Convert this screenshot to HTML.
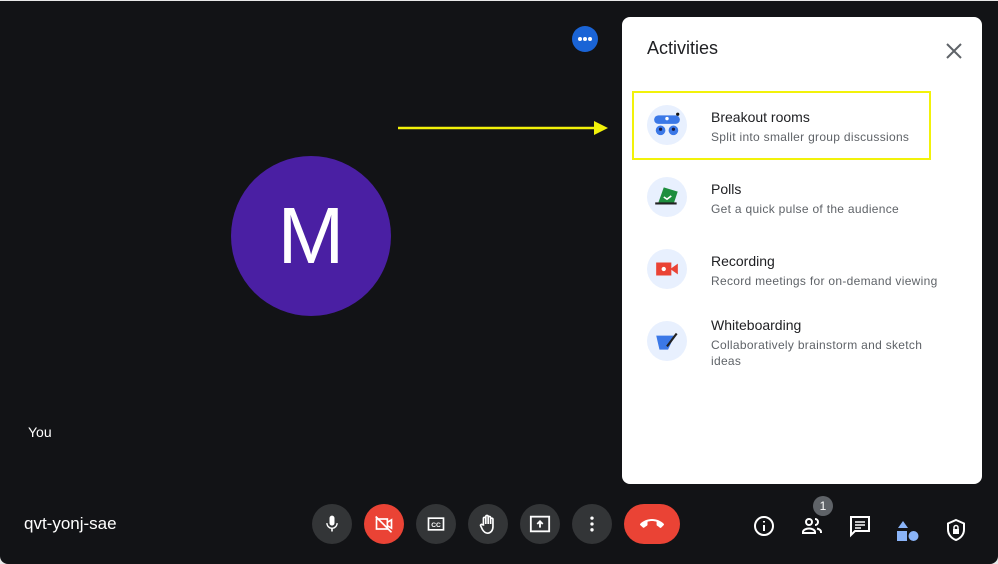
<!DOCTYPE html>
<html><head><style>
*{margin:0;padding:0;box-sizing:border-box}
body{width:998px;height:564px;background:#e8e8e8;font-family:"Liberation Sans",Arial,sans-serif;overflow:hidden;position:relative}
.main{position:absolute;left:0;top:1px;width:998px;height:563px;background:#121316;border-radius:0 0 8px 8px}
.abs{position:absolute}
.btn{position:absolute;top:503px;width:40px;height:40px;border-radius:20px;background:#333537;display:flex;align-items:center;justify-content:center}
.panel{position:absolute;left:622px;top:17px;width:360px;height:467px;background:#fff;border-radius:8px}
.item{position:absolute;left:89px;font-size:14px;color:#202124}
.item small{display:block;font-size:12px;color:#5f6368;margin-top:4px;letter-spacing:.3px;line-height:16px}
.ic{position:absolute;left:25px;width:40px;height:40px;border-radius:20px;background:#e8f0fe;display:flex;align-items:center;justify-content:center}
</style></head><body>
<div class="main">
<div class="abs" style="left:231px;top:155px;width:160px;height:160px;border-radius:80px;background:#4a1fa3;color:#fff;font-size:80px;text-align:center;line-height:160px">M</div>
<div class="abs" style="left:28px;top:423px;color:#fff;font-size:14px">You</div>
<div class="abs" style="left:24px;top:513px;color:#fff;font-size:17px">qvt-yonj-sae</div>
<svg class="abs" style="left:572px;top:25px" width="26" height="26"><circle cx="13" cy="13" r="13" fill="#1a64d6"/><circle cx="8" cy="13" r="2" fill="#fff"/><circle cx="13" cy="13" r="2" fill="#fff"/><circle cx="18" cy="13" r="2" fill="#fff"/></svg>
<svg class="abs" style="left:398px;top:117px" width="212" height="20"><line x1="0" y1="10" x2="198" y2="10" stroke="#f2f20a" stroke-width="2.5"/><polygon points="196,3 210,10 196,17" fill="#f2f20a"/></svg>

<div class="btn" style="left:312px"><svg width="20" height="20" viewBox="0 0 24 24" fill="#fff"><path d="M12 14a3 3 0 003-3V5a3 3 0 00-6 0v6a3 3 0 003 3zm5.3-3a5.3 5.3 0 01-10.6 0H5a7 7 0 006 6.9V21h2v-3.1A7 7 0 0019 11z"/></svg></div>
<div class="btn" style="left:364px;background:#ea4335"><svg width="20" height="20" viewBox="0 0 24 24" fill="none" stroke="#fff" stroke-width="2"><rect x="3" y="6" width="13" height="12"/><path d="M16 10l5-3v10l-5-3M2 3l19 19"/></svg></div>
<div class="btn" style="left:416px"><svg width="20" height="20" viewBox="0 0 24 24"><rect x="3" y="5" width="18" height="14" fill="none" stroke="#fff" stroke-width="2"/><text x="12" y="15.5" font-size="8" fill="#fff" text-anchor="middle" font-family="Liberation Sans" font-weight="bold">CC</text></svg></div>
<div class="btn" style="left:468px"><svg width="22" height="22" viewBox="0 0 24 24" fill="none" stroke="#fff" stroke-width="1.8"><path d="M7 13V6a1.3 1.3 0 012.6 0v6V4a1.3 1.3 0 012.6 0v8V5a1.3 1.3 0 012.6 0v7V7a1.3 1.3 0 012.6 0v8c0 4-2.5 7-6 7-2.5 0-4-1.5-5.5-4L4 14c-.6-1 .8-2 1.6-1.3z"/></svg></div>
<div class="btn" style="left:520px"><svg width="22" height="22" viewBox="0 0 24 24" fill="none" stroke="#fff" stroke-width="2"><rect x="2" y="4" width="20" height="16"/><path d="M12 16v-7M9 12l3-3 3 3" /></svg></div>
<div class="btn" style="left:572px"><svg width="20" height="20" viewBox="0 0 24 24" fill="#fff"><circle cx="12" cy="5" r="2"/><circle cx="12" cy="12" r="2"/><circle cx="12" cy="19" r="2"/></svg></div>
<div class="btn" style="left:624px;width:56px;background:#ea4335"><svg width="24" height="24" viewBox="0 0 24 24" fill="#fff"><path d="M12 9c-1.6 0-3.1.3-4.5.7v3.1c0 .4-.2.7-.6.9-1 .5-1.9 1.1-2.6 1.8-.2.2-.4.3-.7.3s-.5-.1-.7-.3L.3 13.1A1 1 0 010 12.4c0-.3.1-.5.3-.7C3.3 8.8 7.4 7 12 7s8.7 1.8 11.7 4.7c.2.2.3.4.3.7s-.1.5-.3.7l-2.5 2.5c-.2.2-.4.3-.7.3s-.5-.1-.7-.3c-.8-.7-1.6-1.3-2.6-1.8-.3-.2-.6-.5-.6-.9V9.7C15.1 9.3 13.6 9 12 9z"/></svg></div>

<svg class="abs" style="left:752px;top:513px" width="24" height="24" viewBox="0 0 24 24" fill="none" stroke="#fff" stroke-width="2"><circle cx="12" cy="12" r="9"/><path d="M12 11v6M12 7v1.5"/></svg>
<div class="abs" style="left:813px;top:495px;width:20px;height:20px;border-radius:10px;background:#5f6368;color:#fff;font-size:12px;text-align:center;line-height:20px">1</div>
<svg class="abs" style="left:800px;top:513px" width="24" height="24" viewBox="0 0 24 24" fill="none" stroke="#fff" stroke-width="2"><circle cx="9" cy="8" r="3"/><path d="M3 19v-1c0-2 3-3.5 6-3.5s6 1.5 6 3.5v1zM15 5a3 3 0 010 6M17 14.5c2 .5 4 1.5 4 3.5v1"/></svg>
<svg class="abs" style="left:848px;top:513px" width="24" height="24" viewBox="0 0 24 24" fill="none" stroke="#fff" stroke-width="2"><path d="M3 3h18v14H7l-4 4z"/><path d="M7 8h10M7 11h10M7 14h6" stroke-width="1.6"/></svg>
<svg class="abs" style="left:896px;top:519px" width="24" height="24" viewBox="0 0 24 24" fill="#8ab4f8"><polygon points="7,1 12,8 2,8"/><rect x="1" y="11" width="10" height="10"/><circle cx="17.5" cy="16" r="5"/></svg>
<svg class="abs" style="left:944px;top:517px" width="24" height="24" viewBox="0 0 24 24" fill="none" stroke="#fff" stroke-width="2"><path d="M12 2l8 3.5v6c0 5-3.5 9-8 10.5C7.5 20.5 4 16.5 4 11.5v-6z"/><rect x="9" y="11" width="6" height="5" fill="#fff" stroke="none"/><path d="M10 11V9.5a2 2 0 014 0V11" stroke-width="1.5"/></svg>
</div>

<div class="panel">
<div class="abs" style="left:25px;top:21px;font-size:18px;color:#202124">Activities</div>
<svg class="abs" style="left:322px;top:24px" width="20" height="20" viewBox="0 0 20 20" stroke="#5f6368" stroke-width="2"><path d="M3 3l14 14M17 3L3 17"/></svg>
<div class="abs" style="left:10px;top:74px;width:299px;height:69px;border:2px solid #f2f20a"></div>
<div class="ic" style="top:88px"><svg width="30" height="26" viewBox="0 0 28 24"><rect x="2" y="3" width="24" height="8" rx="4" fill="#3b78e7"/><circle cx="14" cy="6" r="1.6" fill="#fff"/><circle cx="8" cy="17" r="4.5" fill="#3b78e7"/><circle cx="20" cy="17" r="4.5" fill="#3b78e7"/><circle cx="8" cy="16" r="1.5" fill="#1a1a40"/><circle cx="20" cy="16" r="1.5" fill="#1a1a40"/><circle cx="24" cy="2" r="1.5" fill="#111"/></svg></div>
<div class="item" style="top:92px">Breakout rooms<small>Split into smaller group discussions</small></div>
<div class="ic" style="top:160px"><svg width="30" height="26" viewBox="0 0 28 24"><polygon points="11,3 24,7 20,19 6,17" fill="#1e8e3e"/><path d="M11 12l3 2 4-3" stroke="#fff" stroke-width="1.5" fill="none"/><path d="M3 18h20" stroke="#222" stroke-width="2"/></svg></div>
<div class="item" style="top:164px">Polls<small>Get a quick pulse of the audience</small></div>
<div class="ic" style="top:232px"><svg width="26" height="22" viewBox="0 0 24 20"><rect x="2" y="4" width="14" height="12" fill="#ea4335"/><polygon points="15,10 22,5 22,15" fill="#ea4335"/><circle cx="9" cy="10" r="2" fill="#fff"/></svg></div>
<div class="item" style="top:236px">Recording<small>Record meetings for on-demand viewing</small></div>
<div class="ic" style="top:304px"><svg width="28" height="26" viewBox="0 0 26 24"><path d="M3 7h17l-6 13H6z" fill="#3b78e7"/><path d="M13 17L22 5" stroke="#222" stroke-width="2"/></svg></div>
<div class="item" style="top:300px">Whiteboarding<small>Collaboratively brainstorm and sketch<br>ideas</small></div>
</div>
</body></html>
